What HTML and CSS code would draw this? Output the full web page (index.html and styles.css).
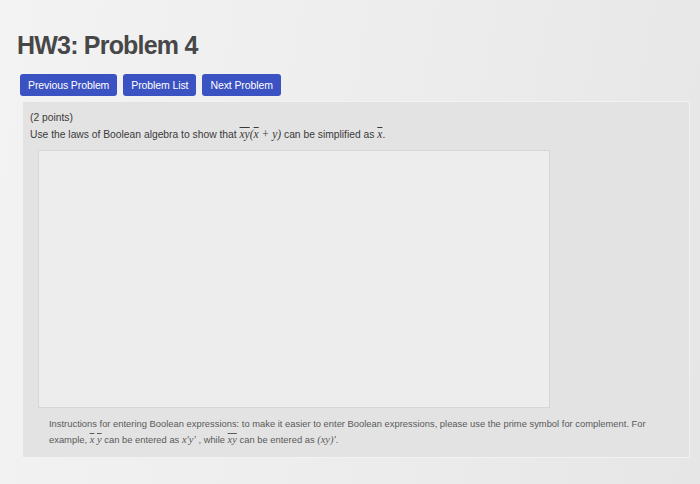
FILE: index.html
```html
<!DOCTYPE html>
<html>
<head>
<meta charset="utf-8">
<link rel="stylesheet" href="styles.css">
</head>
<body>
<div class="page">
  <h1 class="title">HW3: Problem 4</h1>
  <div class="nav">
    <span class="btn">Previous Problem</span>
    <span class="btn">Problem List</span>
    <span class="btn">Next Problem</span>
  </div>
  <div class="problem">
    <div class="points">(2 points)</div>
    <div class="statement">Use the laws of Boolean algebra to show that <span class="m"><span class="ov">xy</span>(<span class="ov">x</span> + y)</span> can be simplified as <span class="m"><span class="ov">x</span></span>.</div>
    <div class="answer"></div>
    <div class="instructions">Instructions for entering Boolean expressions: to make it easier to enter Boolean expressions, please use the prime symbol for complement. For<br>example, <span class="m"><span class="ov">x</span> <span class="ov">y</span></span> can be entered as <span class="m">x′y′</span> , while <span class="m"><span class="ov">xy</span></span> can be entered as <span class="m">(xy)′</span>.</div>
  </div>
</div>
</body>
</html>
```
FILE: styles.css
```css
html, body {
  margin: 0;
  padding: 0;
}
body {
  width: 700px;
  height: 484px;
  overflow: hidden;
  background: linear-gradient(100deg, #f3f3f3 0%, #ececec 60%, #e6e6e6 100%);
  font-family: "Liberation Sans", Arial, sans-serif;
}
.page {
  padding: 31px 0 0 17px;
}
.title {
  margin: 0;
  font-size: 25px;
  line-height: 28px;
  font-weight: bold;
  letter-spacing: -0.8px;
  color: #474747;
}
.nav {
  display: flex;
  gap: 6px;
  margin: 15px 0 0 3px;
}
.btn {
  display: block;
  background: #3b52c2;
  color: #ffffff;
  font-size: 10.5px;
  line-height: 22px;
  height: 22px;
  padding: 0 8px;
  border-radius: 3px;
  letter-spacing: -0.1px;
}
.problem {
  margin: 5px 10px 0 5px;
  height: 357px;
  box-sizing: border-box;
  background: #e3e3e3;
  border: 1px solid #f2f2f2;
  padding: 8px 0 0 7px;
  color: #3a3a3a;
  font-size: 10.3px;
}
.points {
  line-height: 16px;
}
.statement {
  line-height: 16px;
}
.m {
  font-family: "Liberation Serif", "Times New Roman", serif;
  font-style: italic;
  font-size: 11.5px;
}
.ov {
  text-decoration: overline;
}
.answer {
  margin: 7px 0 0 8px;
  width: 510px;
  height: 256px;
  background: #ededed;
  border: 1px solid #d6d6d6;
}
.instructions {
  margin: 8px 0 0 19px;
  font-size: 9.4px;
  line-height: 16px;
  color: #5a5a5a;
  white-space: nowrap;
}
.instructions .m {
  font-size: 10.5px;
}
```
